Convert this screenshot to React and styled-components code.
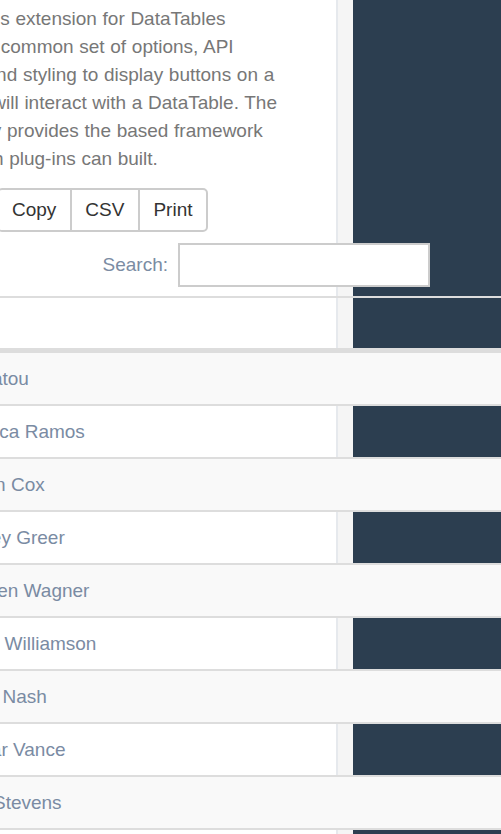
import React from "react";
import styled, { createGlobalStyle } from "styled-components";

const Global = createGlobalStyle`
  html, body {
    margin: 0;
    padding: 0;
    overflow: hidden;
    background: #ffffff;
  }
  body {
    font-family: "Liberation Sans", Arial, Helvetica, sans-serif;
    font-size: 19px;
  }
  * { box-sizing: border-box; }
`;

const Page = styled.div`
  display: grid;
  grid-template-columns: 429px 17px 1fr;
  margin-left: -93px;
  width: calc(100% + 93px);
  min-height: 834px;
`;

const Main = styled.main`
  position: relative;
  z-index: 1;
  min-width: 0;
  background: #ffffff;
  padding-top: 5px;
`;

const Gutter = styled.div`
  border-left: 2px solid #e6e9ed;
  background: #f5f5f5;
`;

const Sidebar = styled.aside`
  background: #2c3e50;
`;

const Intro = styled.p`
  width: 385px;
  margin: 0 0 15px;
  font-size: 19px;
  line-height: 28px;
  word-spacing: 0.4px;
  color: #777777;
`;

const Wrapper = styled.div`
  width: 523px;
`;

const ButtonGroup = styled.div`
  display: inline-flex;
  margin-left: 89.5px;
`;

const Button = styled.button`
  font-family: "Liberation Sans", Arial, sans-serif;
  font-size: 19px;
  line-height: 26px;
  height: 44px;
  padding: 7px 13.5px;
  color: #333333;
  background: #ffffff;
  border: 2px solid #cccccc;
  border-radius: 0;
  cursor: pointer;
  & + & { margin-left: -2px; }
  &:first-child { border-radius: 5px 0 0 5px; }
  &:last-child { border-radius: 0 5px 5px 0; }
`;

const SearchRow = styled.div`
  display: flex;
  justify-content: flex-end;
  margin-top: 11px;
`;

const SearchLabel = styled.label`
  display: flex;
  align-items: center;
  gap: 10px;
  font-size: 19px;
  color: #7b8ca3;
`;

const SearchInput = styled.input`
  width: 252px;
  height: 44px;
  border: 2px solid #cccccc;
  background: #ffffff;
  padding: 0 10px;
  font-family: "Liberation Sans", Arial, sans-serif;
  font-size: 19px;
  outline: none;
`;

const Table = styled.table`
  margin-top: 9px;
  margin-left: 28.5px;
  width: 640px;
  border-collapse: separate;
  border-spacing: 0;
  font-size: 19px;
`;

const HeadCell = styled.th`
  text-align: left;
  padding: 0 11px 0 9px;
  height: 50px;
  line-height: 50px;
  border-top: 2px solid #dddddd;
  border-bottom: 3px solid #dddddd;
  font-weight: bold;
  color: #333333;
`;

const Row = styled.tr`
  background: ${(p) => (p.$striped ? "#f9f9f9" : "transparent")};
`;

const Cell = styled.td`
  padding: 0 11px;
  line-height: 51px;
  border-top: 2px solid #dddddd;
  color: #7a8ba3;
  white-space: nowrap;
`;

const names = [
  "Airi Satou",
  "Angelica Ramos",
  "Ashton Cox",
  "Bradley Greer",
  "Brenden Wagner",
  "Brielle Williamson",
  "Bruno Nash",
  "Caesar Vance",
  "Cara Stevens",
  "Cedric Kelly",
];

export default function App() {
  return (
    <>
      <Global />
      <Page>
        <Main>
          <Intro>
            The Buttons extension for DataTables provides a common set of options, API
            methods and styling to display buttons on a page that will interact with a
            DataTable. The core library provides the based framework upon which plug-ins
            can built.
          </Intro>
          <Wrapper>
            <ButtonGroup>
              <Button>Copy</Button>
              <Button>CSV</Button>
              <Button>Print</Button>
            </ButtonGroup>
            <SearchRow>
              <SearchLabel>
                Search:
                <SearchInput type="search" />
              </SearchLabel>
            </SearchRow>
            <Table>
              <thead>
                <tr>
                  <HeadCell>Name</HeadCell>
                </tr>
              </thead>
              <tbody>
                {names.map((n, i) => (
                  <Row key={n} $striped={i % 2 === 0}>
                    <Cell>{n}</Cell>
                  </Row>
                ))}
              </tbody>
            </Table>
          </Wrapper>
        </Main>
        <Gutter />
        <Sidebar />
      </Page>
    </>
  );
}
